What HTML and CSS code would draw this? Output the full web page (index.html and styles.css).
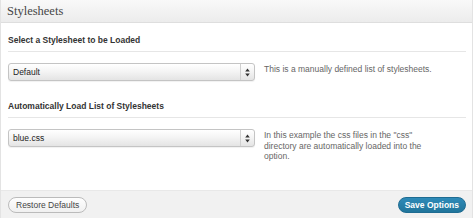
FILE: index.html
```html
<!DOCTYPE html>
<html lang="en">
<head>
    <meta charset="UTF-8">
    <title>Stylesheets</title>
    <link rel="stylesheet" href="styles.css">
</head>
<body>
    <div class="panel">
        <div class="panel-head">
            <h3>Stylesheets</h3>
        </div>

        <div class="panel-body">
            <div class="field">
                <h4>Select a Stylesheet to be Loaded</h4>
                <div class="field-row">
                    <div class="popup">
                        <span class="popup-label">Default</span>
                        <span class="popup-arrows">
                            <svg width="5" height="9" viewBox="0 0 5 9"><path d="M2.5 0.5 L4.8 3.6 H0.2 Z M2.5 8.5 L4.8 5.4 H0.2 Z" fill="#333"/></svg>
                        </span>
                    </div>
                    <p class="desc">This is a manually defined list of stylesheets.</p>
                </div>
            </div>

            <div class="field field-last">
                <h4>Automatically Load List of Stylesheets</h4>
                <div class="field-row">
                    <div class="popup">
                        <span class="popup-label">blue.css</span>
                        <span class="popup-arrows">
                            <svg width="5" height="9" viewBox="0 0 5 9"><path d="M2.5 0.5 L4.8 3.6 H0.2 Z M2.5 8.5 L4.8 5.4 H0.2 Z" fill="#333"/></svg>
                        </span>
                    </div>
                    <p class="desc">In this example the css files in the "css" directory are automatically loaded into the option.</p>
                </div>
            </div>
        </div>

        <div class="panel-foot">
            <button class="btn">Restore Defaults</button>
            <button class="btn btn-primary">Save Options</button>
        </div>
    </div>
</body>
</html>
```

FILE: styles.css
```css
body {
    margin: 0;
    background: #fff;
    font-family: 'Liberation Sans', Arial, sans-serif;
}

.panel {
    width: 471px;
    height: 218px;
    border-left: 1px solid #e3e3e3;
    border-right: 1px solid #e3e3e3;
    display: flex;
    flex-direction: column;
    overflow: hidden;
}

.panel-head {
    height: 22px;
    background: linear-gradient(to bottom, #f9f9f9, #ececec);
    border-bottom: 1px solid #dedede;
    display: flex;
    align-items: center;
    padding-left: 6px;
}

.panel-head h3 {
    margin: 0;
    font-family: 'Liberation Serif', 'Times New Roman', serif;
    font-weight: normal;
    font-size: 12.5px;
    color: #464646;
}

.panel-body {
    flex: 1;
    padding: 0 6px 0 7px;
}

.field h4 {
    margin: 0;
    padding: 12px 0 5px 0;
    line-height: 11px;
    font-size: 8.5px;
    font-weight: bold;
    color: #333;
    border-bottom: 1px solid #e6e6e6;
}

.field-row {
    display: flex;
    align-items: flex-start;
    gap: 9px;
    margin-top: 11px;
    margin-bottom: 8px;
}

.popup {
    width: 245px;
    height: 16px;
    border: 1px solid #c4c4c4;
    border-radius: 3px;
    background: linear-gradient(to bottom, #ffffff, #f3f3f3 50%, #e4e4e4);
    box-shadow: 0 1px 1px rgba(0,0,0,0.06);
    display: flex;
    align-items: center;
    flex-shrink: 0;
}

.popup-label {
    flex: 1;
    padding-left: 4px;
    font-size: 8.5px;
    color: #222;
}

.popup-arrows {
    width: 13px;
    height: 16px;
    border-left: 1px solid #d0d0d0;
    display: flex;
    align-items: center;
    justify-content: center;
}

.popup-arrows svg {
    display: block;
}

.desc {
    margin: 0;
    padding-top: 1px;
    width: 182px;
    font-size: 8.5px;
    line-height: 10.5px;
    color: #666;
}

.panel-foot {
    height: 28px;
    background: #f1f1f1;
    border-top: 1px solid #e8e8e8;
    display: flex;
    align-items: flex-start;
    justify-content: space-between;
    padding: 6px 6px 0 7px;
    box-sizing: border-box;
}

.btn {
    height: 16px;
    padding: 0 7px;
    border: 1px solid #bbb;
    border-radius: 8px;
    background: linear-gradient(to bottom, #fefefe, #f0f0f0);
    font-family: 'Liberation Sans', Arial, sans-serif;
    font-size: 8.5px;
    color: #464646;
    line-height: 14px;
}

.btn-primary {
    border-color: #1f6c92;
    background: linear-gradient(to bottom, #2e8ab8, #21759b);
    color: #fff;
    font-weight: bold;
    padding: 0 6px;
}
```
